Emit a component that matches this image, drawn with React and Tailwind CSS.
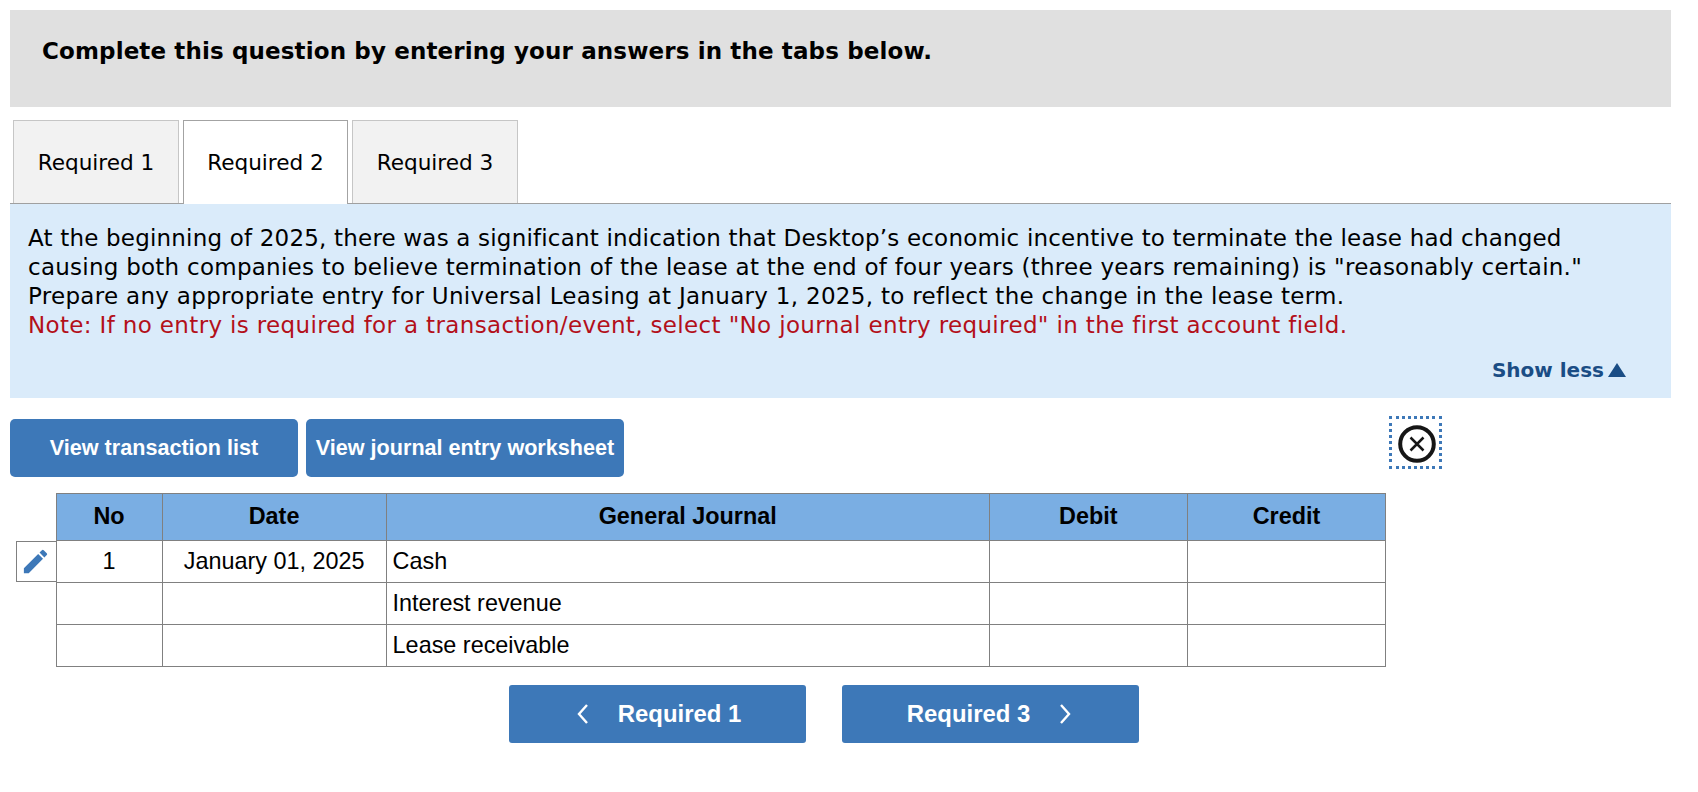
import React from "react";

const V = "font-['DejaVu_Sans','Liberation_Sans',sans-serif]";
const A = "font-['Liberation_Sans',Arial,sans-serif]";

function Tab({ label, active }) {
  return (
    <div
      className={
        active
          ? "w-[165px] h-[84px] -mb-px z-10 flex items-center justify-center bg-white border border-b-0 border-[#a3a3a3] pt-[1px]"
          : "w-[166px] h-[83px] flex items-center justify-center bg-[#f2f2f2] border border-b-0 border-[#c6c6c6] pt-[2px]"
      }
    >
      <span className={`${V} text-[21.6px] text-black`}>{label}</span>
    </div>
  );
}

const cell = "border border-[#808080]";

function Row({ no, date, account, first }) {
  return (
    <tr className="h-[42px]">
      <td className="p-0 align-top">
        {first && (
          <div className="w-[41px] h-[41px] border border-r-0 border-[#808080] flex items-center justify-center pr-[4px]">
            <svg width="31" height="31" viewBox="0 0 24 24" fill="#3d78b8">
              <path d="M3 17.25V21h3.75L17.81 9.94l-3.75-3.75L3 17.25zM20.71 7.04a1 1 0 0 0 0-1.41l-2.34-2.34a1 1 0 0 0-1.41 0l-1.83 1.83 3.75 3.75 1.83-1.83z" />
            </svg>
          </div>
        )}
      </td>
      <td className={`${cell} text-center`}>{no}</td>
      <td className={`${cell} text-center`}>{date}</td>
      <td className={`${cell} pl-[6px]`}>{account}</td>
      <td className={cell}></td>
      <td className={cell}></td>
    </tr>
  );
}

function Btn({ children, className }) {
  return (
    <button className={`${A} ${className} bg-[#3d78b8] text-white font-bold flex items-center justify-center`}>
      {children}
    </button>
  );
}

export default function App() {
  return (
    <div className="w-[1698px] h-[792px] bg-white p-[10px] overflow-hidden">
      <div className="w-[1661px]">
        <div className="h-[97px] bg-[#e0e0e0] pl-[32px] pt-[27px]">
          <div className={`${V} font-bold text-[23px] tracking-[0.13px] leading-[28px] text-black`}>
            Complete this question by entering your answers in the tabs below.
          </div>
        </div>

        <div className="mt-[13px] flex items-end pl-[3px] border-b border-[#a0a0a0] h-[84px]">
          <Tab label="Required 1" />
          <div className="w-[4px]"></div>
          <Tab label="Required 2" active />
          <div className="w-[4px]"></div>
          <Tab label="Required 3" />
        </div>

        <div className="h-[194px] bg-[#daebfa] pl-[18px] pt-[20px] flex flex-col">
          <div className={`${V} text-[23px] leading-[29px] text-black whitespace-nowrap`}>
            <p className="tracking-[0.19px]">At the beginning of 2025, there was a significant indication that Desktop’s economic incentive to terminate the lease had changed</p>
            <p className="tracking-[0.25px]">causing both companies to believe termination of the lease at the end of four years (three years remaining) is "reasonably certain."</p>
            <p className="tracking-[0.30px]">Prepare any appropriate entry for Universal Leasing at January 1, 2025, to reflect the change in the lease term.</p>
            <p className="tracking-[0.35px] text-[#b3101a]">Note: If no entry is required for a transaction/event, select "No journal entry required" in the first account field.</p>
          </div>
          <div className="mt-[16px] pr-[45px] flex justify-end items-center gap-[4px]">
            <span className={`${V} font-bold text-[20px] leading-[28px] text-[#1a4d85]`}>Show less</span>
            <svg width="18" height="14" viewBox="0 0 18 14" fill="#1a4d85"><path d="M9 0 18 14H0z" /></svg>
          </div>
        </div>

        <div className="mt-[18px] h-[61px] flex items-start">
          <div className="mt-[3px] flex gap-[8px]">
            <Btn className="w-[288px] h-[58px] rounded-[5px] text-[21.6px]">View transaction list</Btn>
            <Btn className="w-[318px] h-[58px] rounded-[5px] text-[21.6px]">View journal entry worksheet</Btn>
          </div>
          <div className="ml-[765px] w-[53px] h-[53px] border-[3px] border-dotted border-[#3d78b8] flex items-center justify-center">
            <svg className="ml-[2px] mt-[2px]" width="38" height="38" viewBox="0 0 38 38" fill="none" stroke="#161616">
              <circle cx="19" cy="19" r="16.8" strokeWidth="4" />
              <path d="M12.5 12.5 25.5 25.5M25.5 12.5 12.5 25.5" strokeWidth="2.5" />
            </svg>
          </div>
        </div>

        <table className={`${A} mt-[16px] ml-[6px] border-collapse table-fixed text-[23.4px] text-black w-[1370px]`}>
          <colgroup>
            <col className="w-[40px]" />
            <col className="w-[106px]" />
            <col className="w-[224px]" />
            <col className="w-[603px]" />
            <col className="w-[198px]" />
            <col className="w-[198px]" />
          </colgroup>
          <thead>
            <tr className="h-[47px]">
              <th className="p-0"></th>
              {["No", "Date", "General Journal", "Debit", "Credit"].map((h) => (
                <th key={h} className={`${cell} bg-[#7aaee3] font-bold text-center`}>{h}</th>
              ))}
            </tr>
          </thead>
          <tbody>
            <Row no="1" date="January 01, 2025" account="Cash" first />
            <Row account="Interest revenue" />
            <Row account="Lease receivable" />
          </tbody>
        </table>

        <div className="mt-[18px] ml-[499px] flex gap-[36px]">
          <Btn className="w-[297px] h-[58px] rounded-[3px] gap-[28px] pl-[2px] text-[23.9px]">
            <svg width="14" height="22" viewBox="0 0 14 22" fill="none" stroke="white" strokeWidth="2.4"><path d="M11 2 3 11l8 9" /></svg>
            Required 1
          </Btn>
          <Btn className="w-[297px] h-[58px] rounded-[3px] gap-[28px] pr-[2px] text-[23.9px]">
            Required 3
            <svg width="14" height="22" viewBox="0 0 14 22" fill="none" stroke="white" strokeWidth="2.4"><path d="M3 2l8 9-8 9" /></svg>
          </Btn>
        </div>
      </div>
    </div>
  );
}
